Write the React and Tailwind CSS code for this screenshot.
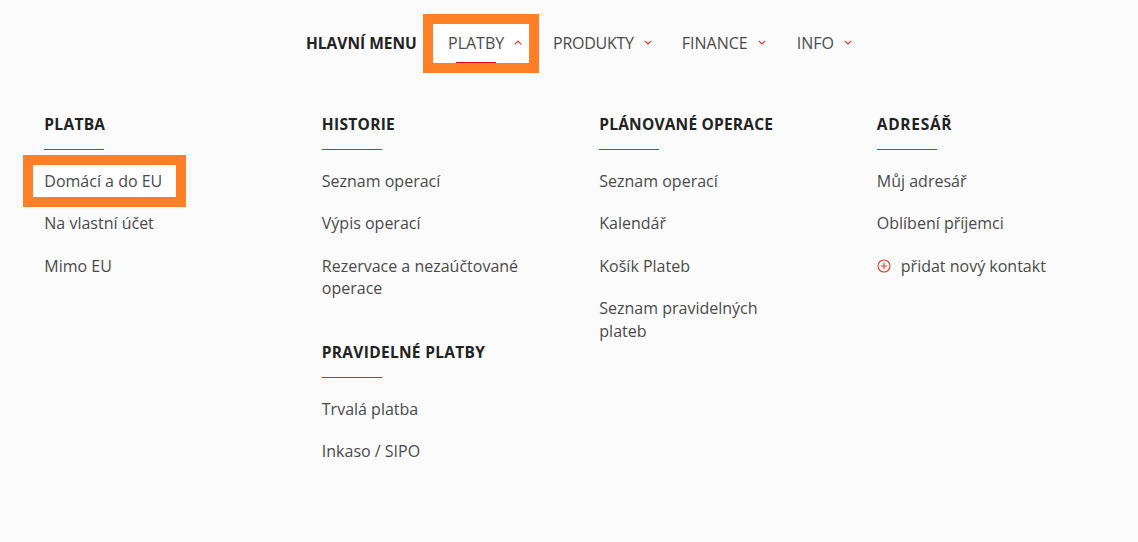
import React from 'react'

const columns = [
    [{
        title: 'PLATBA',
        items: [{ label: 'Domácí a do EU', marked: true }, { label: 'Na vlastní účet' }, { label: 'Mimo EU' }],
    }],
    [{
        title: 'HISTORIE',
        items: [{ label: 'Seznam operací' }, { label: 'Výpis operací' }, { label: 'Rezervace a nezaúčtované operace' }],
    }, {
        title: 'PRAVIDELNÉ PLATBY',
        items: [{ label: 'Trvalá platba' }, { label: 'Inkaso / SIPO' }],
    }],
    [{
        title: 'PLÁNOVANÉ OPERACE',
        titleClass: 'tracking-[0.2px]',
        items: [{ label: 'Seznam operací' }, { label: 'Kalendář' }, { label: 'Košík Plateb' }, { label: 'Seznam pravidelných plateb' }],
    }],
    [{
        title: 'ADRESÁŘ',
        titleClass: 'tracking-[0.7px]',
        items: [{ label: 'Můj adresář' }, { label: 'Oblíbení příjemci' }, { label: 'přidat nový kontakt', add: true }],
    }],
]

function Chevron({ up }) {
    return (
        <svg className="w-[8px] h-[5px] text-[#e8392f]" viewBox="0 0 8 5" fill="none" stroke="currentColor" strokeWidth="1.2">
            <path d={up ? 'M0.8 4.4L4 1.2L7.2 4.4' : 'M0.8 0.8L4 4L7.2 0.8'} />
        </svg>
    )
}

function NavItem({ label, className }) {
    return (
        <div className={`flex items-center gap-[10px] text-[16px] ${className}`}>
            <span className={label === 'PRODUKTY' ? 'tracking-[-0.25px]' : ''}>{label}</span>
            <span className="-mt-[3px]"><Chevron /></span>
        </div>
    )
}

function MenuItem({ item }) {
    if (item.marked) {
        return (
            <li className="-ml-[21px] -my-[14.75px] w-[163px] border-[10px] border-[#ff7f27] bg-white pl-[11px] py-[4.75px]">
                {item.label}
            </li>
        )
    }
    if (item.add) {
        return (
            <li className="flex items-center gap-[10px]">
                <svg className="w-[14px] h-[14px] text-[#e8392f]" viewBox="0 0 14 14" fill="none" stroke="currentColor" strokeWidth="1.1">
                    <circle cx="7" cy="7" r="6" />
                    <path d="M7 3.8V10.2M3.8 7H10.2" />
                </svg>
                <span>{item.label}</span>
            </li>
        )
    }
    return <li>{item.label}</li>
}

function Section({ section }) {
    return (
        <div className="mb-[41px]">
            <h3 className={`font-bold text-[15.5px] leading-[22px] text-[#222] ${section.titleClass || 'tracking-[0.3px]'}`}>{section.title}</h3>
            <div className="w-[60px] h-px bg-[#0a70b8] mt-[14px] mb-[20px]" />
            <ul className="flex flex-col gap-[20px] max-w-[200px]">
                {section.items.map((item) => <MenuItem key={item.label} item={item} />)}
            </ul>
        </div>
    )
}

export default function App() {
    return (
        <div className="w-[1138px] h-[542px] overflow-hidden bg-[#fbfbfb] font-['Open_Sans',sans-serif] text-[16px] leading-[22.5px] text-[#4a4a4a]">
            <nav className="flex items-center h-[59px] mt-[14px] pl-[306px]">
                <span className="font-bold text-[15.5px] text-[#222] w-[117px]">HLAVNÍ MENU</span>
                <div className="relative flex items-center gap-[10px] w-[116px] h-[59px] border-[10px] border-[#ff7f27] bg-white pl-[15px] text-[16px]">
                    <span>PLATBY</span>
                    <span className="-mt-[3px]"><Chevron up /></span>
                    <span className="absolute left-[23px] bottom-0 w-[40px] h-[1px] bg-[#e30613]" />
                </div>
                <NavItem label="PRODUKTY" className="ml-[14px]" />
                <NavItem label="FINANCE" className="ml-[30px]" />
                <NavItem label="INFO" className="ml-[31px]" />
            </nav>
            <div className="grid grid-cols-4 w-[1110px] ml-[44.3px] mt-[39.75px]">
                {columns.map((sections, index) => (
                    <div key={index}>
                        {sections.map((section) => <Section key={section.title} section={section} />)}
                    </div>
                ))}
            </div>
        </div>
    )
}
